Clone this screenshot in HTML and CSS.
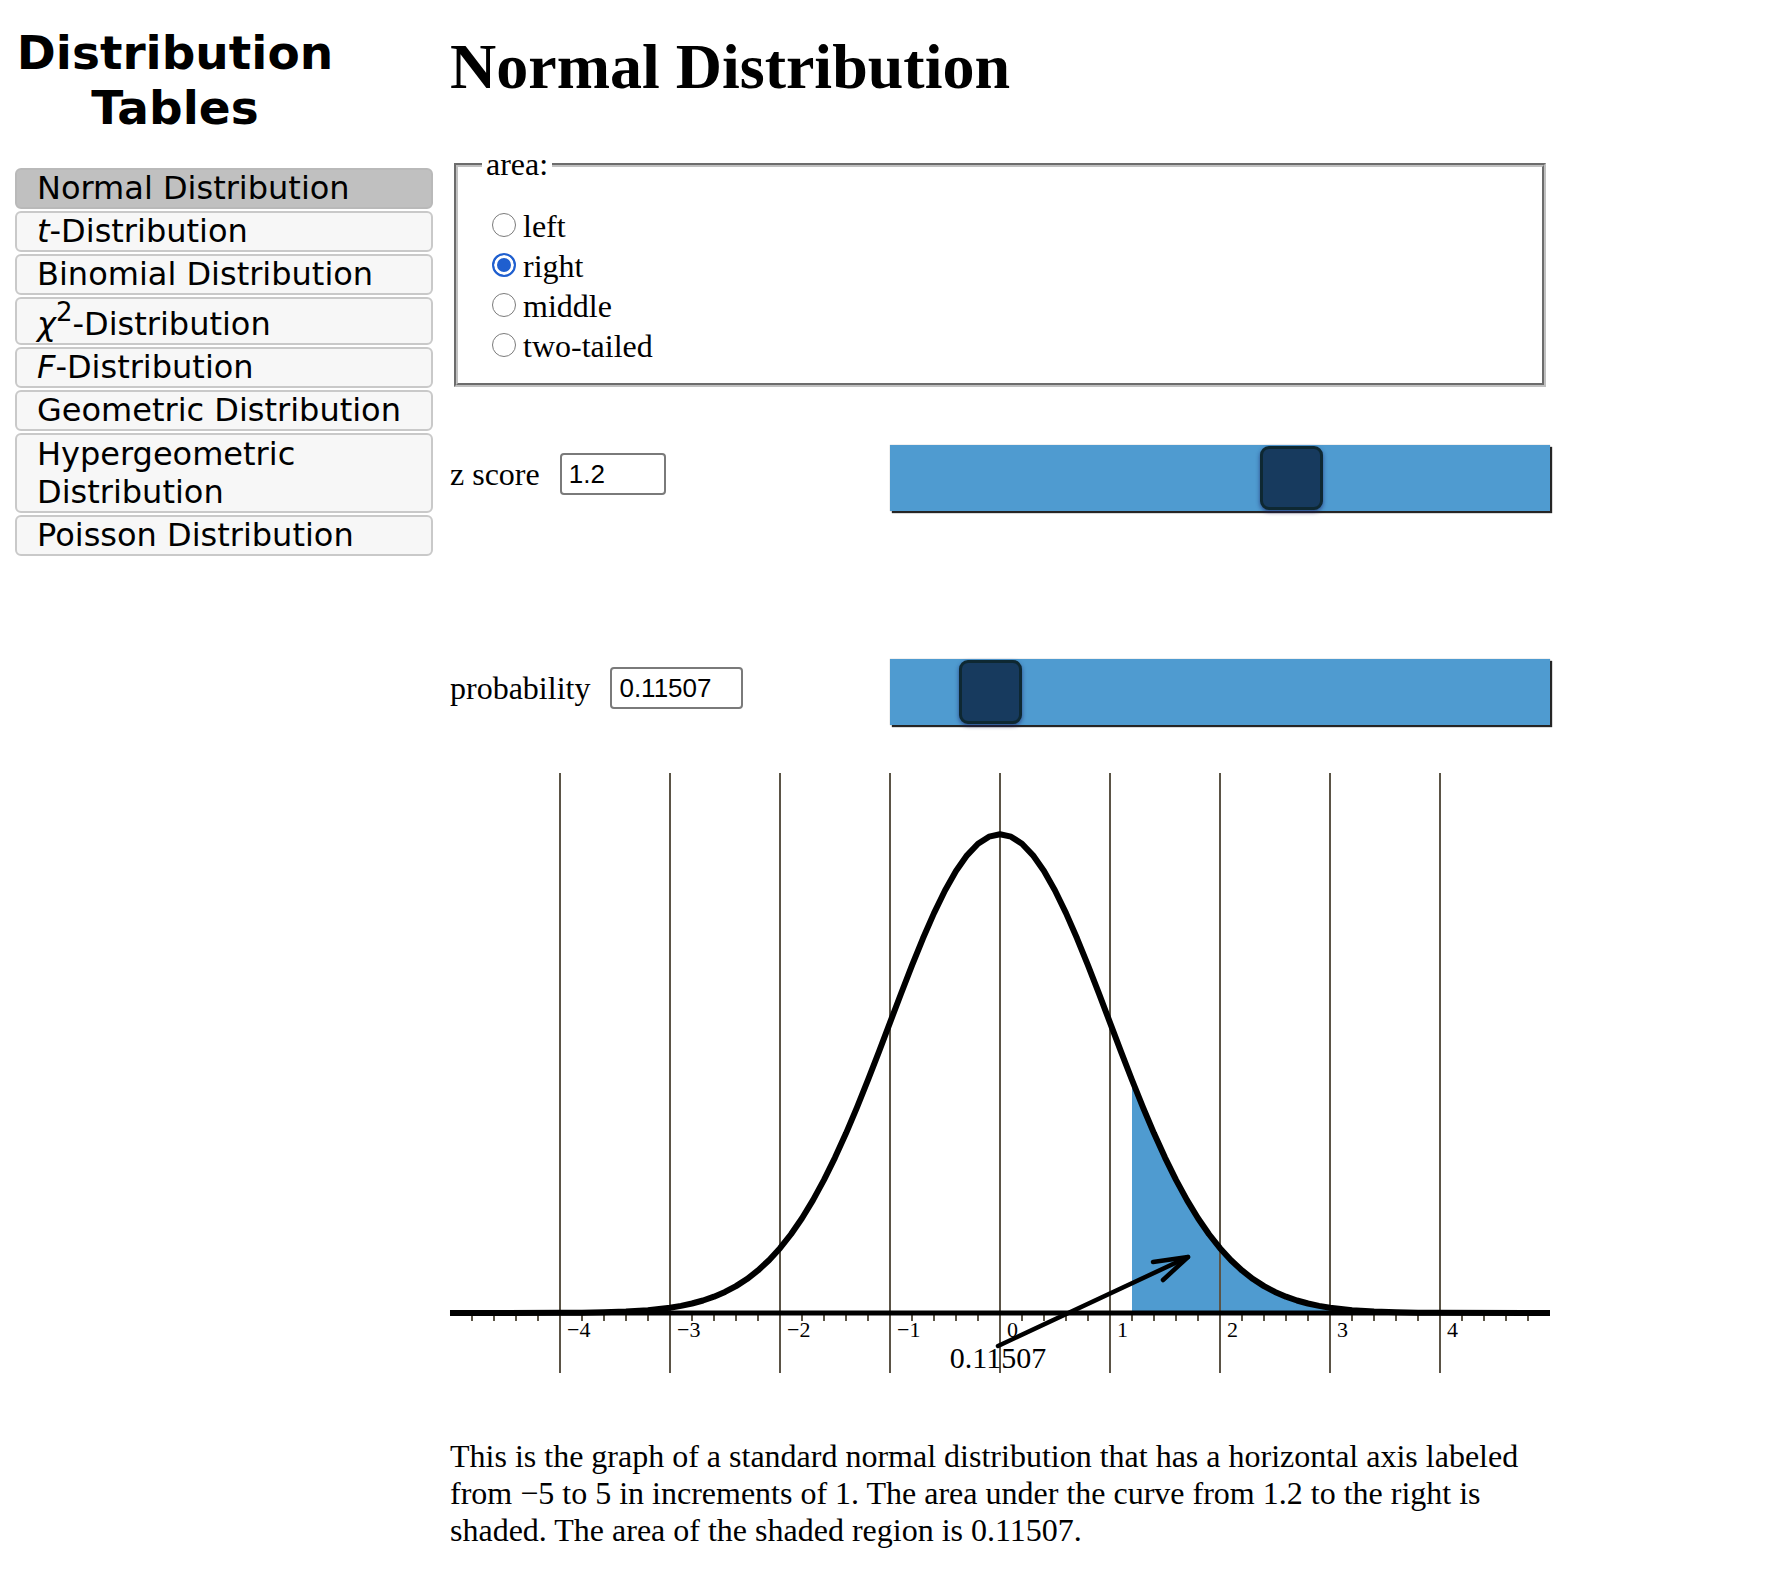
FILE: index.html
```html
<!DOCTYPE html>
<html lang="en">
<head>
<meta charset="utf-8">
<title>Normal Distribution</title>
<link rel="stylesheet" href="styles.css">
</head>
<body>
<div class="page">
  <nav class="sidebar">
    <h2 class="site-title">Distribution Tables</h2>
    <ul class="nav">
      <li class="nav-item active">Normal Distribution</li>
      <li class="nav-item"><i>t</i>-Distribution</li>
      <li class="nav-item">Binomial Distribution</li>
      <li class="nav-item"><i>χ</i><sup>2</sup>-Distribution</li>
      <li class="nav-item"><i>F</i>-Distribution</li>
      <li class="nav-item">Geometric Distribution</li>
      <li class="nav-item nav-item-wrap">Hypergeometric Distribution</li>
      <li class="nav-item">Poisson Distribution</li>
    </ul>
  </nav>
  <main class="main">
    <h1 class="page-title">Normal Distribution</h1>
    <fieldset class="area">
      <legend class="area-legend">area:</legend>
      <label class="opt"><input class="radio" type="radio" name="area">left</label>
      <label class="opt"><input class="radio" type="radio" name="area" checked>right</label>
      <label class="opt"><input class="radio" type="radio" name="area">middle</label>
      <label class="opt"><input class="radio" type="radio" name="area">two-tailed</label>
    </fieldset>

    <div class="ctrl-row ctrl-z">
      <div class="ctrl-left">
        <span class="ctrl-label">z score</span>
        <input class="num num-z" type="text" value="1.2">
      </div>
      <div class="slider"><span class="handle" style="left:370px"></span></div>
    </div>

    <div class="ctrl-row ctrl-p">
      <div class="ctrl-left">
        <span class="ctrl-label">probability</span>
        <input class="num num-p" type="text" value="0.11507">
      </div>
      <div class="slider"><span class="handle" style="left:69px"></span></div>
    </div>

    <svg class="graph" width="1100" height="600" viewBox="0 0 1100 600" xmlns="http://www.w3.org/2000/svg">
      <path class="shade" d="M682,540 L682,306.98 L693,334.36 L704,360.33 L715,384.58 L726,406.89 L737,427.14 L748,445.26 L759,461.26 L770,475.21 L781,487.22 L792,497.43 L803,506.01 L814,513.13 L825,518.97 L836,523.7 L847,527.5 L858,530.5 L869,532.86 L880,534.68 L902,537.14 L924,538.52 L946,539.27 L968,539.65 L990,539.84 L1100,540 Z"/>
      <g class="grid">
        <line x1="110" y1="0" x2="110" y2="600"/>
        <line x1="220" y1="0" x2="220" y2="600"/>
        <line x1="330" y1="0" x2="330" y2="600"/>
        <line x1="440" y1="0" x2="440" y2="600"/>
        <line x1="550" y1="0" x2="550" y2="600"/>
        <line x1="660" y1="0" x2="660" y2="600"/>
        <line x1="770" y1="0" x2="770" y2="600"/>
        <line x1="880" y1="0" x2="880" y2="600"/>
        <line x1="990" y1="0" x2="990" y2="600"/>
      </g>
      <path class="ticks" d="M22,540v8 M44,540v8 M66,540v8 M88,540v8 M132,540v8 M154,540v8 M176,540v8 M198,540v8 M242,540v8 M264,540v8 M286,540v8 M308,540v8 M352,540v8 M374,540v8 M396,540v8 M418,540v8 M462,540v8 M484,540v8 M506,540v8 M528,540v8 M572,540v8 M594,540v8 M616,540v8 M638,540v8 M682,540v8 M704,540v8 M726,540v8 M748,540v8 M792,540v8 M814,540v8 M836,540v8 M858,540v8 M902,540v8 M924,540v8 M946,540v8 M968,540v8 M1012,540v8 M1034,540v8 M1056,540v8 M1078,540v8"/>
      <line class="axis" x1="0" y1="540" x2="1100" y2="540"/>
      <path class="curve" d="M0,540 L110,539.84 L132,539.65 L154,539.27 L176,538.52 L198,537.14 L220,534.68 L231,532.86 L242,530.5 L253,527.5 L264,523.7 L275,518.97 L286,513.13 L297,506.01 L308,497.43 L319,487.22 L330,475.21 L341,461.26 L352,445.26 L363,427.14 L374,406.89 L385,384.58 L396,360.33 L407,334.36 L418,306.98 L429,278.58 L440,249.63 L451,220.7 L462,192.37 L473,165.3 L484,140.13 L495,117.52 L506,98.08 L517,82.33 L528,70.75 L539,63.66 L550,61.27 L561,63.66 L572,70.75 L583,82.33 L594,98.08 L605,117.52 L616,140.13 L627,165.3 L638,192.37 L649,220.7 L660,249.63 L671,278.58 L682,306.98 L693,334.36 L704,360.33 L715,384.58 L726,406.89 L737,427.14 L748,445.26 L759,461.26 L770,475.21 L781,487.22 L792,497.43 L803,506.01 L814,513.13 L825,518.97 L836,523.7 L847,527.5 L858,530.5 L869,532.86 L880,534.68 L902,537.14 L924,538.52 L946,539.27 L968,539.65 L990,539.84 L1100,540"/>
      <g class="tick-labels">
        <text x="117" y="564">−4</text>
        <text x="227" y="564">−3</text>
        <text x="337" y="564">−2</text>
        <text x="447" y="564">−1</text>
        <text x="557" y="564">0</text>
        <text x="667" y="564">1</text>
        <text x="777" y="564">2</text>
        <text x="887" y="564">3</text>
        <text x="997" y="564">4</text>
      </g>
      <g class="arrow">
        <line x1="548" y1="573" x2="738" y2="484"/>
        <polyline points="703,489 738,484 713,507"/>
      </g>
      <text class="area-label" x="548" y="595">0.11507</text>
    </svg>

    <p class="desc">This is the graph of a standard normal distribution that has a horizontal axis labeled from −5 to 5 in increments of 1. The area under the curve from 1.2 to the right is shaded. The area of the shaded region is 0.11507.</p>
  </main>
</div>
</body>
</html>
```
FILE: styles.css
```css
html, body {
  margin: 0;
  padding: 0;
  background: #fff;
  color: #000;
}

body {
  font-family: "Liberation Serif", "Times New Roman", serif;
  font-size: 32px;
}

.page {
  display: flex;
  align-items: flex-start;
  padding-left: 15px;
}

/* ---------- sidebar ---------- */
.sidebar {
  width: 418px;
  flex: none;
  padding-top: 25px;
  font-family: "DejaVu Sans", Verdana, sans-serif;
}

.site-title {
  width: 320px;
  margin: 0 0 33px;
  font-size: 47px;
  font-weight: bold;
  line-height: normal;
  text-align: center;
}

.nav {
  list-style: none;
  margin: 0;
  padding: 0;
  display: flex;
  flex-direction: column;
  gap: 2px;
}

.nav-item {
  border: 2px solid #c9c9c9;
  border-radius: 6px;
  background: #f7f7f7;
  padding: 0 0 0 20px;
  font-size: 32px;
  line-height: 37px;
}

.nav-item-wrap {
  line-height: 38px;
}

.nav-item.active {
  background: #c0c0c0;
  border-color: #b9b9b9;
}

.nav-item sup {
  font-size: 26px;
  line-height: 26px;
  vertical-align: 14px;
}

/* ---------- main ---------- */
.main {
  width: 1100px;
  flex: none;
  margin-left: 17px;
  padding-top: 30px;
}

.page-title {
  margin: 0;
  font-size: 64px;
  font-weight: bold;
  line-height: normal;
}

.area {
  margin: 42px 4px 0;
  border: 4px groove #c0c0c0;
  padding: 23px 24px 17px;
  min-width: 0;
}

.area-legend {
  padding: 0 4px;
  line-height: normal;
}

.opt {
  display: block;
  height: 40px;
  line-height: 40px;
}

.radio {
  -webkit-appearance: none;
  appearance: none;
  box-sizing: border-box;
  width: 24px;
  height: 24px;
  margin: 0 7px 0 10px;
  border: 1.5px solid #7b7b7b;
  border-radius: 50%;
  background: #fff;
  vertical-align: baseline;
}

.radio:checked {
  border: 2px solid #1f5fcf;
  background: #1f5fcf;
  box-shadow: inset 0 0 0 3px #fff;
}

.ctrl-row {
  display: flex;
  height: 66px;
  margin-top: 58px;
}

.ctrl-p {
  margin-top: 148px;
}

.ctrl-left {
  width: 440px;
  flex: none;
  height: 42px;
  margin-top: 8px;
  display: flex;
  align-items: center;
}

.ctrl-label {
  line-height: normal;
}

.num {
  margin: 0 0 0 20px;
  height: 42px;
  box-sizing: border-box;
  border: 2px solid #7a7a7a;
  border-radius: 4px;
  padding: 0 7px;
  font-family: "Liberation Sans", Arial, sans-serif;
  font-size: 26px;
  color: #000;
  background: #fff;
}

.num-z { width: 106px; }
.num-p { width: 133px; }

.slider {
  position: relative;
  width: 660px;
  height: 66px;
  flex: none;
  background: #4f9bd0;
  box-shadow: 2px 2px 1px rgba(0, 0, 0, 0.85), 0 0 1px rgba(0, 0, 0, 0.35);
}

.handle {
  position: absolute;
  top: 1px;
  width: 63px;
  height: 64px;
  box-sizing: border-box;
  background: #173a5e;
  border: 3px solid #0e2832;
  border-radius: 9px;
  box-shadow: 0 2px 4px rgba(20, 20, 90, 0.6);
}

/* ---------- graph ---------- */
.graph {
  display: block;
  margin-top: 48px;
  overflow: visible;
}

.shade { fill: #4f9bd0; }

.grid line {
  stroke: #5b5446;
  stroke-width: 2;
}

.ticks {
  stroke: #5b5446;
  stroke-width: 2;
  fill: none;
}

.axis {
  stroke: #000;
  stroke-width: 5;
}

.curve {
  fill: none;
  stroke: #000;
  stroke-width: 6;
  stroke-linejoin: round;
}

.tick-labels text {
  font-family: "Liberation Serif", "Times New Roman", serif;
  font-size: 22px;
  fill: #000;
}

.arrow line,
.arrow polyline {
  fill: none;
  stroke: #000;
  stroke-width: 4.5;
  stroke-linecap: round;
  stroke-linejoin: round;
}

.area-label {
  font-family: "Liberation Serif", "Times New Roman", serif;
  font-size: 30px;
  text-anchor: middle;
  fill: #000;
}

.desc {
  margin: 65px 0 0;
  line-height: normal;
}
```
